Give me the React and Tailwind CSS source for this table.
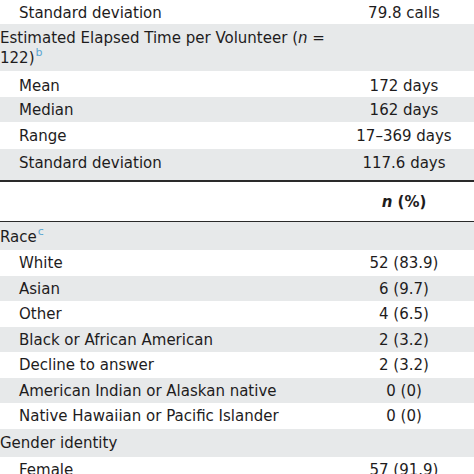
import React from "react";

const Sup = ({ children }) => (
  <sup className="text-[11px] text-[#5aa6d2] relative top-[-7px] ml-[1px] align-baseline">{children}</sup>
);

function Row({ label, value, gray, indent, h, pt = "pt-[1px]", children }) {
  return (
    <div
      className={`flex items-center ${pt} ${gray ? "bg-[#e7e9ea]" : "bg-white"}`}
      style={{ height: h }}
    >
      <div className={`flex-1 whitespace-nowrap ${indent ? "pl-[19px]" : "pl-0"}`}>{children || label}</div>
      <div className="w-[140px] text-center whitespace-nowrap">{value}</div>
    </div>
  );
}

export default function App() {
  const race = [
    ["White", "52 (83.9)", false],
    ["Asian", "6 (9.7)", true],
    ["Other", "4 (6.5)", false],
    ["Black or African American", "2 (3.2)", true],
    ["Decline to answer", "2 (3.2)", false],
    ["American Indian or Alaskan native", "0 (0)", true],
    ["Native Hawaiian or Pacific Islander", "0 (0)", false],
  ];
  return (
    <div
      className="w-[474px] h-[474px] overflow-hidden bg-white text-[#1e1c1d] text-[15px] leading-[20px]"
      style={{ fontFamily: '"DejaVu Sans", Verdana, sans-serif' }}
    >
      <Row label="Standard deviation" value="79.8 calls" indent h={24} />
      <div className="flex bg-[#e7e9ea] h-[47px] pt-[4px]">
        <div className="flex-1 whitespace-nowrap">
          Estimated Elapsed Time per Volunteer (<i>n</i> =<br />
          122)<Sup>b</Sup>
        </div>
      </div>
      <Row label="Mean" value="172 days" indent h={26} pt="pt-[3px]" />
      <Row label="Median" value="162 days" indent gray h={25} />
      <Row label="Range" value="17–369 days" indent h={27} />
      <Row label="Standard deviation" value="117.6 days" indent gray h={31} pt="pb-[4px]" />
      <div className="h-[1.5px] bg-[#2a2a2a]" />
      <Row value={<b><i>n</i> (%)</b>} h={39} />
      <div className="h-[1.5px] bg-[#2a2a2a]" />
      <Row gray h={28} pt="pt-[2px]">
        Race<Sup>c</Sup>
      </Row>
      {race.map(([l, v, g]) => (
        <Row key={l} label={l} value={v} gray={g} indent h={25.5} />
      ))}
      <Row label="Gender identity" gray h={28} />
      <Row label="Female" value="57 (91.9)" indent h={26} />
    </div>
  );
}
